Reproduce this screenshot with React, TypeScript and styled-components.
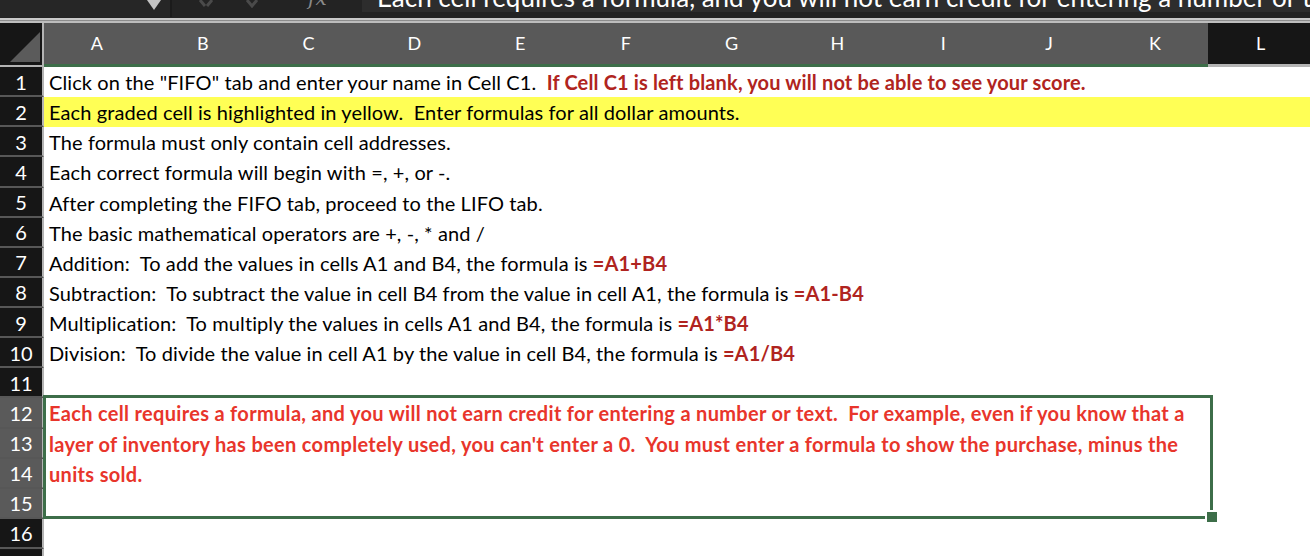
import React from "react";
import styled, { createGlobalStyle } from "styled-components";

const GlobalStyle = createGlobalStyle`
  html, body {
    margin: 0;
    padding: 0;
    background: #ffffff;
    overflow: hidden;
  }
  body {
    width: 1310px;
    height: 556px;
    font-family: Lato, "Open Sans", sans-serif;
  }
`;

const COLUMNS = ["A", "B", "C", "D", "E", "F", "G", "H", "I", "J", "K", "L"];
const COL_WIDTH = 105.8;
const ROW_HEIGHT = 30.13;
const GREEN = "#3d6e49";

type Part = { text: string; tone?: "dark" | "bright" };
type RowData = { parts?: Part[]; yellow?: boolean };

const ROWS: RowData[] = [
  {
    parts: [
      { text: 'Click on the "FIFO" tab and enter your name in Cell C1.  ' },
      { text: "If Cell C1 is left blank, you will not be able to see your score.", tone: "dark" },
    ],
  },
  {
    yellow: true,
    parts: [{ text: "Each graded cell is highlighted in yellow.  Enter formulas for all dollar amounts." }],
  },
  { parts: [{ text: "The formula must only contain cell addresses." }] },
  { parts: [{ text: "Each correct formula will begin with =, +, or -." }] },
  { parts: [{ text: "After completing the FIFO tab, proceed to the LIFO tab." }] },
  { parts: [{ text: "The basic mathematical operators are +, -, * and /" }] },
  {
    parts: [
      { text: "Addition:  To add the values in cells A1 and B4, the formula is " },
      { text: "=A1+B4", tone: "dark" },
    ],
  },
  {
    parts: [
      { text: "Subtraction:  To subtract the value in cell B4 from the value in cell A1, the formula is " },
      { text: "=A1-B4", tone: "dark" },
    ],
  },
  {
    parts: [
      { text: "Multiplication:  To multiply the values in cells A1 and B4, the formula is " },
      { text: "=A1*B4", tone: "dark" },
    ],
  },
  {
    parts: [
      { text: "Division:  To divide the value in cell A1 by the value in cell B4, the formula is " },
      { text: "=A1/B4", tone: "dark" },
    ],
  },
  {},
  {
    parts: [
      {
        text: "Each cell requires a formula, and you will not earn credit for entering a number or text.  For example, even if you know that a",
        tone: "bright",
      },
    ],
  },
  {
    parts: [
      {
        text: "layer of inventory has been completely used, you can't enter a 0.  You must enter a formula to show the purchase, minus the",
        tone: "bright",
      },
    ],
  },
  { parts: [{ text: "units sold.", tone: "bright" }] },
  {},
  {},
  {},
];

const SELECTED_ROWS = [12, 13, 14, 15];
const SELECTED_COLS = 11;

const App = () => (
  <>
    <GlobalStyle />
    <Page>
      <TopBar>
        <NameBox>
          <DropArrow viewBox="0 0 14 10">
            <polygon points="0,0 14,0 7,10" />
          </DropArrow>
        </NameBox>
        <Tools>
          <ToolGlyph viewBox="0 0 16 8" style={{ marginLeft: 26 }}>
            <path d="M2 0 L7 6 M14 0 L9 6" />
          </ToolGlyph>
          <ToolGlyph viewBox="0 0 16 8" style={{ marginLeft: 30 }}>
            <path d="M3 0 L8 6 L13 0" />
          </ToolGlyph>
          <Fx>fx</Fx>
        </Tools>
        <FormulaInput>
          <FormulaText>
            Each cell requires a formula, and you will not earn credit for entering a number or text.  For example
          </FormulaText>
        </FormulaInput>
      </TopBar>
      <BarRule />
      <Sheet>
        <HeaderRow>
          <Corner>
            <CornerTriangle viewBox="0 0 30 30">
              <polygon points="30,0 30,30 0,30" />
            </CornerTriangle>
          </Corner>
          {COLUMNS.map((c, i) => (
            <ColHeader key={c} selected={i < SELECTED_COLS}>
              {c}
            </ColHeader>
          ))}
        </HeaderRow>
        {ROWS.map((row, i) => (
          <Row key={i}>
            <RowHeader selected={SELECTED_ROWS.includes(i + 1)}>{i + 1}</RowHeader>
            <CellArea yellow={row.yellow}>
              {row.parts?.map((p, j) => (
                <Run key={j} tone={p.tone}>
                  {p.text}
                </Run>
              ))}
            </CellArea>
          </Row>
        ))}
        <Selection />
        <FillHandle />
      </Sheet>
    </Page>
  </>
);

export default App;

const Page = styled.div`
  width: 1310px;
  height: 556px;
  overflow: hidden;
  background: #ffffff;
`;

const TopBar = styled.div`
  display: flex;
  height: 18px;
  background: #232323;
  overflow: hidden;
`;

const NameBox = styled.div`
  position: relative;
  width: 170px;
  height: 17px;
  background: #262626;
  border-right: 2px solid #1b1b1b;
`;

const DropArrow = styled.svg`
  position: absolute;
  left: 147px;
  top: 0;
  width: 14px;
  height: 10px;
  fill: #c4c4c4;
`;

const Tools = styled.div`
  display: flex;
  align-items: flex-start;
  width: 190px;
`;

const ToolGlyph = styled.svg`
  width: 16px;
  height: 8px;
  fill: none;
  stroke: #4a4a4a;
  stroke-width: 3px;
`;

const Fx = styled.span`
  margin-left: 48px;
  margin-top: -12px;
  font-family: "DejaVu Serif", "Liberation Serif", serif;
  font-style: italic;
  font-size: 20px;
  color: #8a8a8a;
  line-height: 20px;
`;

const FormulaInput = styled.div`
  flex: 1;
  height: 12px;
  background: #2d2d2d;
  overflow: hidden;
  padding-left: 15px;
`;

const FormulaText = styled.div`
  margin-top: -17px;
  font-size: 26px;
  line-height: 28px;
  color: #ffffff;
  white-space: pre;
`;

const BarRule = styled.div`
  height: 1px;
  border-top: 2px solid #c9c9c9;
  border-bottom: 2px solid #bdbdbd;
  background: #8c8c8c;
`;

const Sheet = styled.div`
  position: relative;
`;

const HeaderRow = styled.div`
  display: flex;
  height: 44px;
`;

const Corner = styled.div`
  position: relative;
  width: 44px;
  flex: none;
  background: #161616;
  border-right: 2px solid #b4b4b4;
  border-bottom: 2px solid #b4b4b4;
  box-sizing: border-box;
  height: 44px;
`;

const CornerTriangle = styled.svg`
  position: absolute;
  left: 10px;
  top: 9px;
  width: 30px;
  height: 30px;
  fill: #5b5b5b;
`;

const ColHeader = styled.div<{ selected: boolean }>`
  width: ${COL_WIDTH}px;
  flex: none;
  box-sizing: border-box;
  display: flex;
  align-items: center;
  justify-content: center;
  padding-bottom: 2px;
  background: ${({ selected }) => (selected ? "#595959" : "#161616")};
  border-bottom: 3px solid ${({ selected }) => (selected ? GREEN : "#b4b4b4")};
  color: #ffffff;
  font-size: 18px;
`;

const Row = styled.div`
  display: flex;
  height: ${ROW_HEIGHT}px;
`;

const RowHeader = styled.div<{ selected: boolean }>`
  width: 44px;
  flex: none;
  box-sizing: border-box;
  display: flex;
  align-items: center;
  justify-content: center;
  background: ${({ selected }) => (selected ? "#5a5a5a" : "#161616")};
  border-bottom: 2px solid #575757;
  border-right: 2px solid #b4b4b4;
  color: #ffffff;
  font-size: 20px;
  padding-top: 1px;
`;

const CellArea = styled.div<{ yellow?: boolean }>`
  flex: 1;
  display: flex;
  align-items: center;
  padding-left: 5px;
  background: ${({ yellow }) => (yellow ? "#ffff55" : "#ffffff")};
  white-space: pre;
  font-size: 20px;
  color: #000000;
`;

const Run = styled.span<{ tone?: "dark" | "bright" }>`
  font-weight: ${({ tone }) => (tone ? 700 : 400)};
  letter-spacing: ${({ tone }) =>
    tone === "bright" ? "0.32px" : tone === "dark" ? "0.15px" : "0.1px"};
  color: ${({ tone }) =>
    tone === "dark" ? "#b02420" : tone === "bright" ? "#e8352b" : "#000000"};
`;

const Selection = styled.div`
  position: absolute;
  left: 43px;
  top: ${44 + 11 * ROW_HEIGHT - 3}px;
  width: 1170px;
  height: 124px;
  box-sizing: border-box;
  border: 3px solid ${GREEN};
  pointer-events: none;
`;

const FillHandle = styled.div`
  position: absolute;
  left: 1205px;
  top: ${44 + 15 * ROW_HEIGHT - 9}px;
  width: 10px;
  height: 10px;
  background: ${GREEN};
  border: 2px solid #ffffff;
`;
